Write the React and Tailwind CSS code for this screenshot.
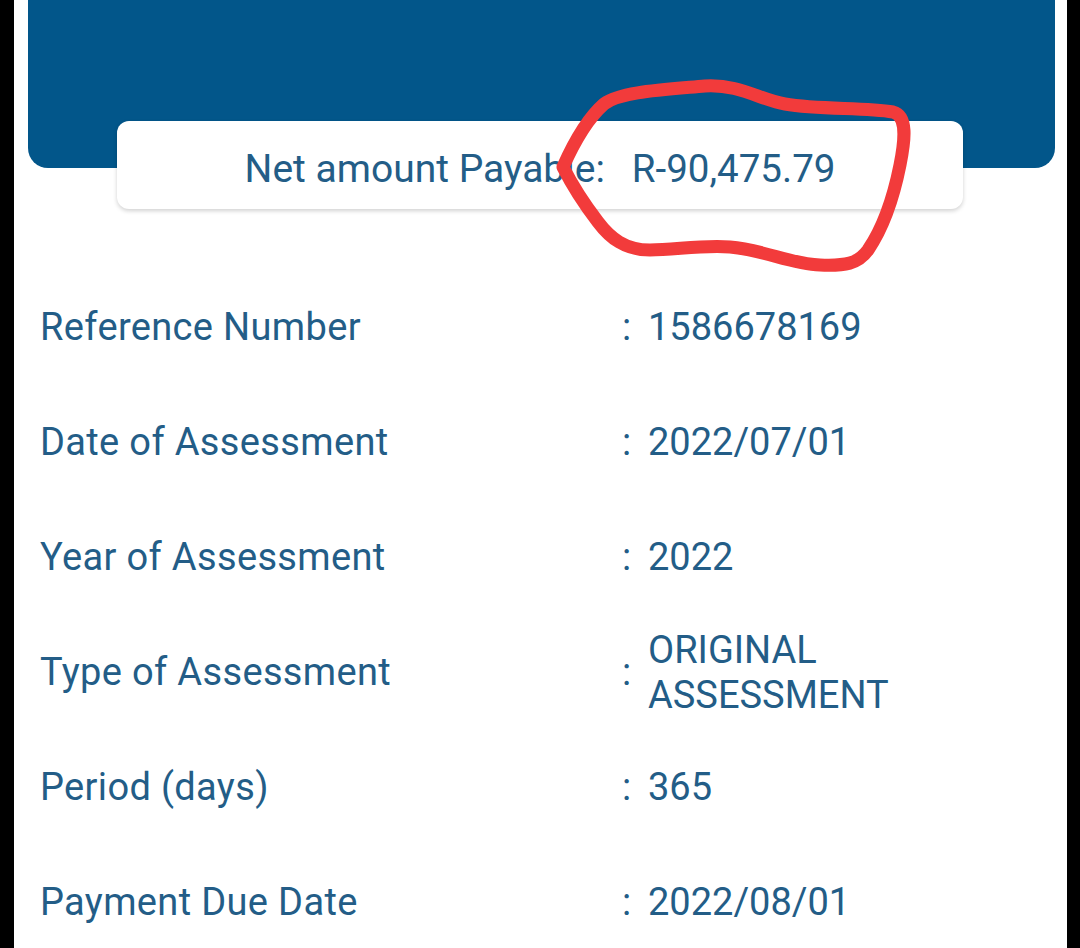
import React from 'react';

const rows = [
  { label: 'Reference Number', value: ['1586678169'] },
  { label: 'Date of Assessment', value: ['2022/07/01'] },
  { label: 'Year of Assessment', value: ['2022'] },
  { label: 'Type of Assessment', value: ['ORIGINAL', 'ASSESSMENT'] },
  { label: 'Period (days)', value: ['365'] },
  { label: 'Payment Due Date', value: ['2022/08/01'] },
];

const App = () => {
  return (
    <div className="w-[1080px] h-[948px] bg-black flex overflow-hidden font-['Roboto',sans-serif]">
      <div className="relative ml-[14px] w-[1053px] h-full bg-white flex flex-col">
        {/* banner */}
        <div className="shrink-0 ml-[14px] w-[1027px] h-[168px] bg-[#02568a] rounded-b-[20px]" />

        {/* net amount card */}
        <div className="shrink-0 -mt-[47px] ml-[103px] w-[846px] h-[88px] bg-white rounded-[12px] shadow-[0_2px_4px_rgba(0,0,0,0.18)] flex items-center justify-center gap-[27px] pt-[8px] text-[39px] text-[#235d87]">
          <span>Net amount Payable:</span>
          <span className="text-[38.5px]">R-90,475.79</span>
        </div>

        {/* details */}
        <div className="shrink-0 mt-[61px] flex flex-col">
          {rows.map((row) => (
            <div key={row.label} className="shrink-0 h-[115px] flex items-center text-[38px] text-[#235d87]">
              <div className="w-[608px] pl-[26px] tracking-[0.35px]">{row.label}</div>
              <div className="w-[26px]">:</div>
              <div className="flex flex-col leading-[45px]">
                {row.value.map((v) => (
                  <span key={v}>{v}</span>
                ))}
              </div>
            </div>
          ))}
        </div>

        {/* red annotation */}
        <svg
          className="absolute left-0 top-0 pointer-events-none"
          width="1053"
          height="300"
          viewBox="14 0 1053 300"
        >
          <path
            d="M563 167 C575 140 588 118 604 104 C620 92 660 90 705 86 C740 84 760 100 785 104 C820 110 865 107 893 112 C908 116 905 140 900 165 C894 195 885 225 868 250 C858 264 845 266 820 265 C790 264 765 250 730 247 C700 245 675 250 650 250 C625 250 610 238 598 222 C585 205 572 185 563 167 Z"
            fill="none"
            stroke="#f23b3b"
            strokeWidth="13"
            strokeLinejoin="round"
          />
        </svg>
      </div>
    </div>
  );
};

export default App;
